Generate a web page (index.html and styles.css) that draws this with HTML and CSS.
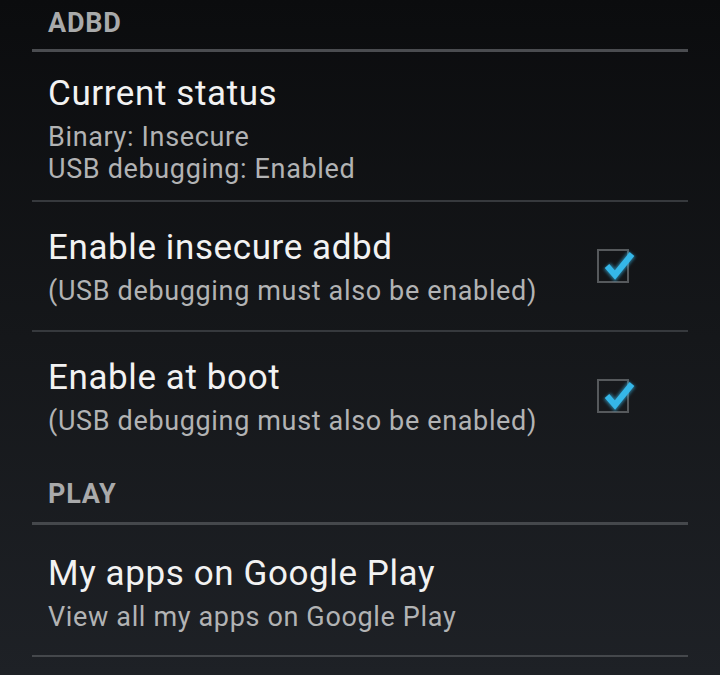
FILE: index.html
```html
<!DOCTYPE html>
<html>
<head>
<meta charset="utf-8">
<link rel="stylesheet" href="styles.css">
</head>
<body>
<div class="list">
  <div class="header header-first">ADBD</div>
  <div class="item item-status">
    <div class="texts">
      <div class="title">Current status</div>
      <div class="sub">Binary: Insecure</div>
      <div class="sub">USB debugging: Enabled</div>
    </div>
  </div>
  <div class="item item-check divided">
    <div class="texts">
      <div class="title">Enable insecure adbd</div>
      <div class="sub">(USB debugging must also be enabled)</div>
    </div>
    <div class="checkbox">
      <svg class="tick" viewBox="0 0 48 44" width="48" height="44"><defs><filter id="g1" x="-30%" y="-30%" width="160%" height="160%"><feGaussianBlur stdDeviation="1.8"/></filter></defs><polyline points="16,21 24,30 41,9" fill="none" stroke="#33b5e5" stroke-width="9" stroke-opacity="0.55" filter="url(#g1)"/><polyline points="16,21 24,30 41,9" fill="none" stroke="#35b7e8" stroke-width="6"/></svg>
    </div>
  </div>
  <div class="item item-check divided">
    <div class="texts">
      <div class="title">Enable at boot</div>
      <div class="sub">(USB debugging must also be enabled)</div>
    </div>
    <div class="checkbox">
      <svg class="tick" viewBox="0 0 48 44" width="48" height="44"><defs><filter id="g2" x="-30%" y="-30%" width="160%" height="160%"><feGaussianBlur stdDeviation="1.8"/></filter></defs><polyline points="16,21 24,30 41,9" fill="none" stroke="#33b5e5" stroke-width="9" stroke-opacity="0.55" filter="url(#g2)"/><polyline points="16,21 24,30 41,9" fill="none" stroke="#35b7e8" stroke-width="6"/></svg>
    </div>
  </div>
  <div class="header header-play">PLAY</div>
  <div class="item item-play">
    <div class="texts">
      <div class="title">My apps on Google Play</div>
      <div class="sub">View all my apps on Google Play</div>
    </div>
  </div>
  <div class="rule"></div>
</div>
</body>
</html>
```

FILE: styles.css
```css
html, body {
  margin: 0;
  padding: 0;
}
body {
  width: 720px;
  height: 675px;
  overflow: hidden;
  background: linear-gradient(to bottom, #0b0c0e 0%, #15171a 50%, #1e2126 100%);
  font-family: Roboto, "Noto Sans", sans-serif;
}
.list {
  padding: 0 32px;
}
.header {
  color: #a9aaab;
  font-weight: 700;
  font-size: 27px;
  line-height: 30px;
  letter-spacing: 0.8px;
  padding: 0 16px;
  border-bottom: 3px solid #4a4c50;
}
.header-first {
  padding-top: 8px;
  padding-bottom: 11px;
}
.header-play {
  padding-top: 19px;
  padding-bottom: 13px;
  border-bottom-color: #45484c;
}
.item {
  display: flex;
  align-items: center;
  padding: 26px 16px 23px;
}
.divided {
  border-top: 2px solid #36393d;
}
.item-status {
  padding-top: 22px;
  padding-bottom: 15px;
}
.item-play {
  padding-top: 29px;
  padding-bottom: 22px;
}
.texts {
  flex: 1;
}
.title {
  color: #f2f2f2;
  font-size: 35px;
  line-height: 40px;
  letter-spacing: 0.6px;
  margin-bottom: 7px;
}
.sub {
  color: #b2b3b4;
  font-size: 27px;
  line-height: 32px;
  letter-spacing: 0.65px;
}
.checkbox {
  position: relative;
  width: 28px;
  height: 30px;
  border: 2px solid #56595c;
  margin-right: 43px;
  margin-bottom: 4px;
}
.tick {
  position: absolute;
  left: -8px;
  top: -6px;
}
.rule {
  height: 2px;
  background: #45484c;
}
```
